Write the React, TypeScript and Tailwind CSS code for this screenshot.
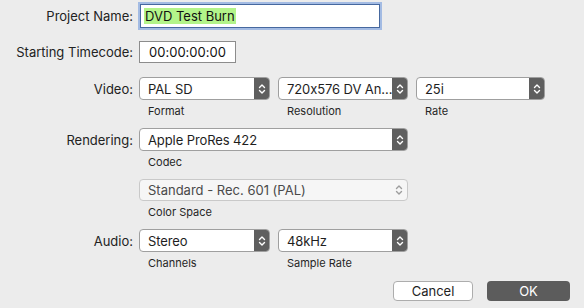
import React from 'react';

const font = { fontFamily: 'Inter, "Noto Sans", sans-serif', fontFeatureSettings: '"calt" 0' };

function Chevrons({ color }: { color: string }) {
  return (
    <svg width="8" height="12" viewBox="0 0 8 12" fill="none" stroke={color} strokeWidth="1.4" strokeLinecap="round" strokeLinejoin="round">
      <path d="M1.5 4.5 L4 2 L6.5 4.5" />
      <path d="M1.5 7.5 L4 10 L6.5 7.5" />
    </svg>
  );
}

interface PopupProps {
  value: string;
  width: string;
  disabled?: boolean;
}

function Popup({ value, width, disabled }: PopupProps) {
  if (disabled) {
    return (
      <div className={`${width} flex h-[22px] items-center rounded-[4px] border border-[#c9c9c9] bg-[#f6f6f6]`}>
        <span className="flex-1 truncate pl-[8px] text-[13px] leading-[16px] text-[#4a4a4a]">{value}</span>
        <span className="flex w-[16px] justify-center">
          <Chevrons color="#9d9d9d" />
        </span>
      </div>
    );
  }
  return (
    <div className={`${width} flex h-[23px] items-stretch overflow-hidden rounded-[4px] border border-[#9f9f9f] bg-white`}>
      <span className="flex flex-1 items-center overflow-hidden whitespace-nowrap pl-[8px] text-[13px] leading-[16px] tracking-[-0.1px] text-[#1e1e1e]">
        {value}
      </span>
      <span className="flex w-[15px] shrink-0 items-center justify-center bg-[#5f5f5f]">
        <Chevrons color="#ffffff" />
      </span>
    </div>
  );
}

function Label({ children }: { children: React.ReactNode }) {
  return <div className="flex items-center justify-end text-[13px] leading-[16px] text-[#222]">{children}</div>;
}

function Sub({ children, width }: { children: React.ReactNode; width: string }) {
  return <div className={`${width} h-[13px] pl-[9px] text-[11px] leading-[13px] text-[#262626]`}>{children}</div>;
}

export default function App() {
  return (
    <div className="h-[308px] w-[584px] bg-[#ececec] pt-[4px]" style={font}>
      <div className="grid grid-cols-[133px_1fr] gap-x-[6px]">
        {/* Project name */}
        <Label>Project Name:</Label>
        <div className="pl-[1px]">
          <div className="flex h-[24px] w-[240px] items-center border border-[#46689f] bg-white pl-[3px] shadow-[0_0_0_2px_#a3bbe3]">
            <span className="bg-[#b3f48a] px-[1px] text-[13px] leading-[16px] text-[#111]">DVD Test Burn</span>
          </div>
        </div>

        {/* Timecode */}
        <div className="col-span-2 h-[13px]" />
        <Label>Starting Timecode:</Label>
        <div>
          <div className="flex h-[22px] w-[97px] items-center justify-center border border-[#8c8c8c] bg-white text-[13px] leading-[16px] text-[#111]">
            00:00:00:00
          </div>
        </div>

        {/* Video */}
        <div className="col-span-2 h-[14px]" />
        <Label>Video:</Label>
        <div className="flex gap-[8px]">
          <Popup value="PAL SD" width="w-[131px]" />
          <Popup value="720x576 DV An…" width="w-[130px]" />
          <Popup value="25i" width="w-[129px]" />
        </div>
        <div />
        <div className="flex gap-[8px] pt-[5px]">
          <Sub width="w-[131px]">Format</Sub>
          <Sub width="w-[130px]">Resolution</Sub>
          <Sub width="w-[129px]">Rate</Sub>
        </div>

        {/* Rendering */}
        <div className="col-span-2 h-[10px]" />
        <Label>Rendering:</Label>
        <div>
          <Popup value="Apple ProRes 422" width="w-[269px]" />
        </div>
        <div />
        <div className="pt-[5px]">
          <Sub width="w-[269px]">Codec</Sub>
        </div>

        <div className="col-span-2 h-[10px]" />
        <div />
        <div>
          <Popup value="Standard - Rec. 601 (PAL)" width="w-[269px]" disabled />
        </div>
        <div />
        <div className="pt-[5px]">
          <Sub width="w-[269px]">Color Space</Sub>
        </div>

        {/* Audio */}
        <div className="col-span-2 h-[10px]" />
        <Label>Audio:</Label>
        <div className="flex gap-[8px]">
          <Popup value="Stereo" width="w-[131px]" />
          <Popup value="48kHz" width="w-[130px]" />
        </div>
        <div />
        <div className="flex gap-[8px] pt-[5px]">
          <Sub width="w-[131px]">Channels</Sub>
          <Sub width="w-[130px]">Sample Rate</Sub>
        </div>
      </div>

      <div className="mt-[11px] flex justify-end gap-[14px] pr-[14px]">
        <button className="h-[20px] w-[80px] rounded-[4px] border border-[#adadad] bg-white text-[13px] leading-[16px] text-[#1e1e1e]">
          Cancel
        </button>
        <button className="h-[20px] w-[83px] rounded-[4px] bg-[#5c5c5c] text-[13px] leading-[16px] text-white">
          OK
        </button>
      </div>
    </div>
  );
}
